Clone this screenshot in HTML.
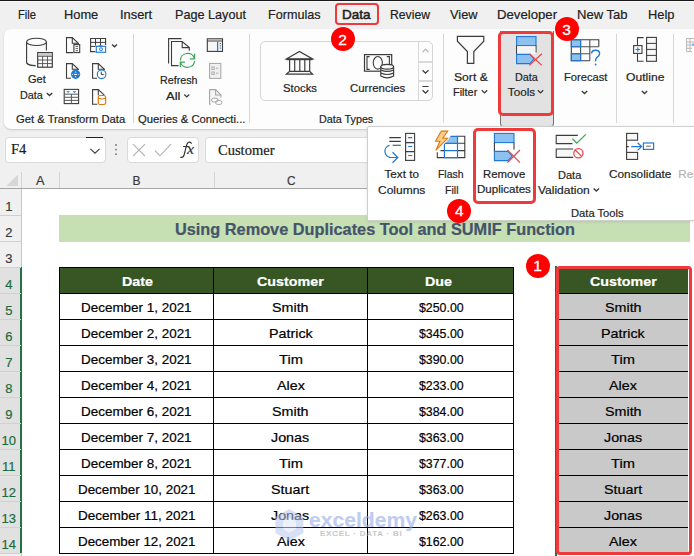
<!DOCTYPE html>
<html><head><meta charset="utf-8"><style>
html,body{margin:0;padding:0;}
body{width:694px;height:556px;position:relative;overflow:hidden;background:#ffffff;font-family:"Liberation Sans", sans-serif;}
.t{position:absolute;white-space:pre;transform-origin:0 0;-webkit-text-stroke:0.2px currentColor;}
.r{position:absolute;box-sizing:border-box;}
svg{position:absolute;overflow:visible;}
</style></head><body>
<div class="r" style="left:0px;top:0px;width:694px;height:189px;background:#f0f0f0;"></div>
<div class="r" style="left:0px;top:0px;width:694px;height:1.2px;background:#1a1a1a;"></div>
<div class="r" style="left:0px;top:1.2px;width:694px;height:1px;background:#f9f9f9;"></div>
<div class="r" style="left:3.5px;top:29px;width:700px;height:99.5px;background:#fdfdfd;border-radius:7px;box-shadow:0 1px 2px rgba(0,0,0,0.16);"></div>
<div class="t" style="left:18.40px;top:7.95px;font-size:13px;line-height:13px;color:#202020;font-family:'Liberation Sans', sans-serif;transform:scaleX(0.859);">File</div>
<div class="t" style="left:64.00px;top:7.95px;font-size:13px;line-height:13px;color:#202020;font-family:'Liberation Sans', sans-serif;transform:scaleX(0.986);">Home</div>
<div class="t" style="left:119.80px;top:7.95px;font-size:13px;line-height:13px;color:#202020;font-family:'Liberation Sans', sans-serif;transform:scaleX(0.990);">Insert</div>
<div class="t" style="left:175.00px;top:7.95px;font-size:13px;line-height:13px;color:#202020;font-family:'Liberation Sans', sans-serif;transform:scaleX(0.973);">Page Layout</div>
<div class="t" style="left:268.00px;top:7.95px;font-size:13px;line-height:13px;color:#202020;font-family:'Liberation Sans', sans-serif;transform:scaleX(0.971);">Formulas</div>
<div class="t" style="left:342.00px;top:7.95px;font-size:13px;line-height:13px;color:#202020;font-family:'Liberation Sans', sans-serif;transform:scaleX(1.038);-webkit-text-stroke:0.5px #202020;">Data</div>
<div class="t" style="left:390.00px;top:7.95px;font-size:13px;line-height:13px;color:#202020;font-family:'Liberation Sans', sans-serif;transform:scaleX(0.938);">Review</div>
<div class="t" style="left:450.00px;top:7.95px;font-size:13px;line-height:13px;color:#202020;font-family:'Liberation Sans', sans-serif;transform:scaleX(0.984);">View</div>
<div class="t" style="left:497.00px;top:7.95px;font-size:13px;line-height:13px;color:#202020;font-family:'Liberation Sans', sans-serif;transform:scaleX(1.013);">Developer</div>
<div class="t" style="left:577.00px;top:7.95px;font-size:13px;line-height:13px;color:#202020;font-family:'Liberation Sans', sans-serif;transform:scaleX(1.005);">New Tab</div>
<div class="t" style="left:648.00px;top:7.95px;font-size:13px;line-height:13px;color:#202020;font-family:'Liberation Sans', sans-serif;transform:scaleX(0.987);">Help</div>
<div class="r" style="left:133px;top:34px;width:1px;height:89px;background:#d6d6d6;"></div>
<div class="r" style="left:249px;top:34px;width:1px;height:89px;background:#d6d6d6;"></div>
<div class="r" style="left:443px;top:34px;width:1px;height:89px;background:#d6d6d6;"></div>
<div class="r" style="left:616px;top:34px;width:1px;height:89px;background:#d6d6d6;"></div>
<div class="r" style="left:673px;top:34px;width:1px;height:89px;background:#d6d6d6;"></div>
<div class="t" style="left:15.70px;top:112.86px;font-size:11.7px;line-height:11.7px;color:#242424;font-family:'Liberation Sans', sans-serif;transform:scaleX(0.961);">Get &amp; Transform Data</div>
<div class="t" style="left:137.50px;top:112.86px;font-size:11.7px;line-height:11.7px;color:#242424;font-family:'Liberation Sans', sans-serif;transform:scaleX(0.967);">Queries &amp; Connecti...</div>
<div class="t" style="left:319.00px;top:112.56px;font-size:11.7px;line-height:11.7px;color:#242424;font-family:'Liberation Sans', sans-serif;transform:scaleX(0.921);">Data Types</div>
<div class="t" style="left:28.20px;top:73.06px;font-size:11.7px;line-height:11.7px;color:#242424;font-family:'Liberation Sans', sans-serif;transform:scaleX(0.944);">Get</div>
<div class="t" style="left:19.60px;top:89.06px;font-size:11.7px;line-height:11.7px;color:#242424;font-family:'Liberation Sans', sans-serif;transform:scaleX(0.923);">Data</div>
<div class="t" style="left:159.70px;top:73.56px;font-size:11.7px;line-height:11.7px;color:#242424;font-family:'Liberation Sans', sans-serif;transform:scaleX(0.915);">Refresh</div>
<div class="t" style="left:166.30px;top:89.66px;font-size:11.7px;line-height:11.7px;color:#242424;font-family:'Liberation Sans', sans-serif;transform:scaleX(1.115);">All</div>
<div class="t" style="left:283.00px;top:82.06px;font-size:11.7px;line-height:11.7px;color:#242424;font-family:'Liberation Sans', sans-serif;transform:scaleX(0.968);">Stocks</div>
<div class="t" style="left:350.30px;top:82.06px;font-size:11.7px;line-height:11.7px;color:#242424;font-family:'Liberation Sans', sans-serif;transform:scaleX(0.978);">Currencies</div>
<div class="t" style="left:454.00px;top:70.86px;font-size:11.7px;line-height:11.7px;color:#242424;font-family:'Liberation Sans', sans-serif;transform:scaleX(1.040);">Sort &amp;</div>
<div class="t" style="left:452.70px;top:86.46px;font-size:11.7px;line-height:11.7px;color:#242424;font-family:'Liberation Sans', sans-serif;transform:scaleX(0.935);">Filter</div>
<div class="t" style="left:563.50px;top:70.96px;font-size:11.7px;line-height:11.7px;color:#242424;font-family:'Liberation Sans', sans-serif;transform:scaleX(0.954);">Forecast</div>
<div class="t" style="left:625.60px;top:70.96px;font-size:11.7px;line-height:11.7px;color:#242424;font-family:'Liberation Sans', sans-serif;transform:scaleX(1.036);">Outline</div>
<div class="r" style="left:4.5px;top:137px;width:101px;height:25.5px;background:#ffffff;border:1px solid #d9d9d9;border-radius:4px;"></div>
<div class="r" style="left:86px;top:137px;width:17px;height:1.2px;background:#222;"></div>
<div class="t" style="left:10.60px;top:141.97px;font-size:14.5px;line-height:14.5px;color:#1a1a1a;font-family:'Liberation Serif', serif;transform:scaleX(1.006);">F4</div>
<div class="r" style="left:126.7px;top:137px;width:72.5px;height:25.5px;background:#ffffff;border:1px solid #d9d9d9;border-radius:4px;"></div>
<div class="r" style="left:204.5px;top:137px;width:500px;height:25.5px;background:#ffffff;border:1px solid #d9d9d9;border-radius:4px;"></div>
<div class="t" style="left:218.20px;top:142.75px;font-size:15px;line-height:15px;color:#1a1a1a;font-family:'Liberation Serif', serif;transform:scaleX(0.969);">Customer</div>
<div class="r" style="left:0px;top:171px;width:694px;height:18px;background:#f0f0f0;"></div>
<div class="r" style="left:0px;top:188px;width:694px;height:1.3px;background:#a6a6a6;"></div>
<div class="r" style="left:21px;top:172px;width:1px;height:16px;background:#d4d4d4;"></div>
<div class="r" style="left:59px;top:172px;width:1px;height:16px;background:#d4d4d4;"></div>
<div class="r" style="left:213.5px;top:172px;width:1px;height:16px;background:#d4d4d4;"></div>
<div class="t" style="left:36.20px;top:174.60px;font-size:12px;line-height:12px;color:#3a3a3a;font-family:'Liberation Sans', sans-serif;transform:scaleX(1.062);">A</div>
<div class="t" style="left:132.50px;top:174.60px;font-size:12px;line-height:12px;color:#3a3a3a;font-family:'Liberation Sans', sans-serif;">B</div>
<div class="t" style="left:286.90px;top:174.60px;font-size:12px;line-height:12px;color:#3a3a3a;font-family:'Liberation Sans', sans-serif;transform:scaleX(0.981);">C</div>
<div class="r" style="left:0px;top:189px;width:21px;height:367px;background:#f0f0f0;"></div>
<div class="r" style="left:0px;top:267px;width:20px;height:286px;background:#e1e1e1;"></div>
<div class="r" style="left:20px;top:267px;width:2px;height:286px;background:#217346;"></div>
<div class="r" style="left:21px;top:553px;width:1px;height:3px;background:#c8c8c8;"></div>
<div class="r" style="left:21px;top:189px;width:1px;height:78px;background:#c8c8c8;"></div>
<div class="r" style="left:0px;top:215px;width:21px;height:1px;background:#d0d0d0;"></div>
<div class="r" style="left:0px;top:241px;width:21px;height:1px;background:#d0d0d0;"></div>
<div class="r" style="left:0px;top:267px;width:21px;height:1px;background:#d0d0d0;"></div>
<div class="r" style="left:0px;top:293px;width:21px;height:1px;background:#d0d0d0;"></div>
<div class="r" style="left:0px;top:319px;width:21px;height:1px;background:#d0d0d0;"></div>
<div class="r" style="left:0px;top:345px;width:21px;height:1px;background:#d0d0d0;"></div>
<div class="r" style="left:0px;top:371px;width:21px;height:1px;background:#d0d0d0;"></div>
<div class="r" style="left:0px;top:397px;width:21px;height:1px;background:#d0d0d0;"></div>
<div class="r" style="left:0px;top:423px;width:21px;height:1px;background:#d0d0d0;"></div>
<div class="r" style="left:0px;top:449px;width:21px;height:1px;background:#d0d0d0;"></div>
<div class="r" style="left:0px;top:475px;width:21px;height:1px;background:#d0d0d0;"></div>
<div class="r" style="left:0px;top:501px;width:21px;height:1px;background:#d0d0d0;"></div>
<div class="r" style="left:0px;top:527px;width:21px;height:1px;background:#d0d0d0;"></div>
<div class="r" style="left:0px;top:553px;width:21px;height:1px;background:#d0d0d0;"></div>
<div class="t" style="left:5.18px;top:199.95px;font-size:13px;line-height:13px;color:#3a3a3a;font-family:'Liberation Sans', sans-serif;">1</div>
<div class="t" style="left:5.18px;top:225.95px;font-size:13px;line-height:13px;color:#3a3a3a;font-family:'Liberation Sans', sans-serif;">2</div>
<div class="t" style="left:5.18px;top:251.95px;font-size:13px;line-height:13px;color:#3a3a3a;font-family:'Liberation Sans', sans-serif;">3</div>
<div class="t" style="left:5.18px;top:277.95px;font-size:13px;line-height:13px;color:#1e6b3c;font-family:'Liberation Sans', sans-serif;">4</div>
<div class="t" style="left:5.18px;top:303.95px;font-size:13px;line-height:13px;color:#1e6b3c;font-family:'Liberation Sans', sans-serif;">5</div>
<div class="t" style="left:5.18px;top:329.95px;font-size:13px;line-height:13px;color:#1e6b3c;font-family:'Liberation Sans', sans-serif;">6</div>
<div class="t" style="left:5.18px;top:355.95px;font-size:13px;line-height:13px;color:#1e6b3c;font-family:'Liberation Sans', sans-serif;">7</div>
<div class="t" style="left:5.18px;top:381.95px;font-size:13px;line-height:13px;color:#1e6b3c;font-family:'Liberation Sans', sans-serif;">8</div>
<div class="t" style="left:5.18px;top:407.95px;font-size:13px;line-height:13px;color:#1e6b3c;font-family:'Liberation Sans', sans-serif;">9</div>
<div class="t" style="left:1.57px;top:433.95px;font-size:13px;line-height:13px;color:#1e6b3c;font-family:'Liberation Sans', sans-serif;">10</div>
<div class="t" style="left:2.05px;top:459.95px;font-size:13px;line-height:13px;color:#1e6b3c;font-family:'Liberation Sans', sans-serif;">11</div>
<div class="t" style="left:1.57px;top:485.95px;font-size:13px;line-height:13px;color:#1e6b3c;font-family:'Liberation Sans', sans-serif;">12</div>
<div class="t" style="left:1.57px;top:511.95px;font-size:13px;line-height:13px;color:#1e6b3c;font-family:'Liberation Sans', sans-serif;">13</div>
<div class="t" style="left:1.57px;top:537.95px;font-size:13px;line-height:13px;color:#1e6b3c;font-family:'Liberation Sans', sans-serif;">14</div>
<div class="r" style="left:59px;top:215px;width:631px;height:26.5px;background:#c6dfb3;"></div>
<div class="t" style="left:174.50px;top:220.78px;font-size:16.5px;line-height:16.5px;color:#44546a;font-family:'Liberation Sans', sans-serif;font-weight:bold;transform:scaleX(0.988);">Using Remove Duplicates Tool and SUMIF Function</div>
<div class="r" style="left:59px;top:267px;width:455px;height:27px;background:#375623;"></div>
<div class="r" style="left:59px;top:267px;width:455px;height:1px;background:#000;"></div>
<div class="r" style="left:59px;top:293px;width:455px;height:1px;background:#000;"></div>
<div class="r" style="left:59px;top:319px;width:455px;height:1px;background:#000;"></div>
<div class="r" style="left:59px;top:345px;width:455px;height:1px;background:#000;"></div>
<div class="r" style="left:59px;top:371px;width:455px;height:1px;background:#000;"></div>
<div class="r" style="left:59px;top:397px;width:455px;height:1px;background:#000;"></div>
<div class="r" style="left:59px;top:423px;width:455px;height:1px;background:#000;"></div>
<div class="r" style="left:59px;top:449px;width:455px;height:1px;background:#000;"></div>
<div class="r" style="left:59px;top:475px;width:455px;height:1px;background:#000;"></div>
<div class="r" style="left:59px;top:501px;width:455px;height:1px;background:#000;"></div>
<div class="r" style="left:59px;top:527px;width:455px;height:1px;background:#000;"></div>
<div class="r" style="left:59px;top:553px;width:455px;height:1px;background:#000;"></div>
<div class="r" style="left:59px;top:267px;width:1px;height:287px;background:#000;"></div>
<div class="r" style="left:213px;top:267px;width:1px;height:287px;background:#000;"></div>
<div class="r" style="left:367px;top:267px;width:1px;height:287px;background:#000;"></div>
<div class="r" style="left:513px;top:267px;width:1px;height:287px;background:#000;"></div>
<div class="t" style="left:121.50px;top:274.65px;font-size:13px;line-height:13px;color:#ffffff;font-family:'Liberation Sans', sans-serif;font-weight:bold;transform:scaleX(1.100);">Date</div>
<div class="t" style="left:257.13px;top:274.65px;font-size:13px;line-height:13px;color:#ffffff;font-family:'Liberation Sans', sans-serif;font-weight:bold;transform:scaleX(1.100);">Customer</div>
<div class="t" style="left:424.99px;top:274.65px;font-size:13px;line-height:13px;color:#ffffff;font-family:'Liberation Sans', sans-serif;font-weight:bold;transform:scaleX(1.100);">Due</div>
<div class="t" style="left:81.30px;top:301.15px;font-size:13px;line-height:13px;color:#000;font-family:'Liberation Sans', sans-serif;transform:scaleX(1.034);">December 1, 2021</div>
<div class="t" style="left:272.22px;top:301.15px;font-size:13px;line-height:13px;color:#000;font-family:'Liberation Sans', sans-serif;transform:scaleX(1.100);">Smith</div>
<div class="t" style="left:418.68px;top:301.15px;font-size:13px;line-height:13px;color:#000;font-family:'Liberation Sans', sans-serif;transform:scaleX(0.950);">$250.00</div>
<div class="t" style="left:81.30px;top:327.15px;font-size:13px;line-height:13px;color:#000;font-family:'Liberation Sans', sans-serif;transform:scaleX(1.034);">December 2, 2021</div>
<div class="t" style="left:268.65px;top:327.15px;font-size:13px;line-height:13px;color:#000;font-family:'Liberation Sans', sans-serif;transform:scaleX(1.100);">Patrick</div>
<div class="t" style="left:418.68px;top:327.15px;font-size:13px;line-height:13px;color:#000;font-family:'Liberation Sans', sans-serif;transform:scaleX(0.950);">$345.00</div>
<div class="t" style="left:81.30px;top:353.15px;font-size:13px;line-height:13px;color:#000;font-family:'Liberation Sans', sans-serif;transform:scaleX(1.034);">December 3, 2021</div>
<div class="t" style="left:278.59px;top:353.15px;font-size:13px;line-height:13px;color:#000;font-family:'Liberation Sans', sans-serif;transform:scaleX(1.125);">Tim</div>
<div class="t" style="left:418.68px;top:353.15px;font-size:13px;line-height:13px;color:#000;font-family:'Liberation Sans', sans-serif;transform:scaleX(0.950);">$390.00</div>
<div class="t" style="left:81.30px;top:379.15px;font-size:13px;line-height:13px;color:#000;font-family:'Liberation Sans', sans-serif;transform:scaleX(1.034);">December 4, 2021</div>
<div class="t" style="left:276.59px;top:379.15px;font-size:13px;line-height:13px;color:#000;font-family:'Liberation Sans', sans-serif;transform:scaleX(1.100);">Alex</div>
<div class="t" style="left:418.68px;top:379.15px;font-size:13px;line-height:13px;color:#000;font-family:'Liberation Sans', sans-serif;transform:scaleX(0.950);">$233.00</div>
<div class="t" style="left:81.30px;top:405.15px;font-size:13px;line-height:13px;color:#000;font-family:'Liberation Sans', sans-serif;transform:scaleX(1.034);">December 6, 2021</div>
<div class="t" style="left:272.22px;top:405.15px;font-size:13px;line-height:13px;color:#000;font-family:'Liberation Sans', sans-serif;transform:scaleX(1.100);">Smith</div>
<div class="t" style="left:418.68px;top:405.15px;font-size:13px;line-height:13px;color:#000;font-family:'Liberation Sans', sans-serif;transform:scaleX(0.950);">$384.00</div>
<div class="t" style="left:81.30px;top:431.15px;font-size:13px;line-height:13px;color:#000;font-family:'Liberation Sans', sans-serif;transform:scaleX(1.034);">December 7, 2021</div>
<div class="t" style="left:271.42px;top:431.15px;font-size:13px;line-height:13px;color:#000;font-family:'Liberation Sans', sans-serif;transform:scaleX(1.100);">Jonas</div>
<div class="t" style="left:418.68px;top:431.15px;font-size:13px;line-height:13px;color:#000;font-family:'Liberation Sans', sans-serif;transform:scaleX(0.950);">$363.00</div>
<div class="t" style="left:81.30px;top:457.15px;font-size:13px;line-height:13px;color:#000;font-family:'Liberation Sans', sans-serif;transform:scaleX(1.034);">December 8, 2021</div>
<div class="t" style="left:278.59px;top:457.15px;font-size:13px;line-height:13px;color:#000;font-family:'Liberation Sans', sans-serif;transform:scaleX(1.125);">Tim</div>
<div class="t" style="left:418.68px;top:457.15px;font-size:13px;line-height:13px;color:#000;font-family:'Liberation Sans', sans-serif;transform:scaleX(0.950);">$377.00</div>
<div class="t" style="left:77.86px;top:483.15px;font-size:13px;line-height:13px;color:#000;font-family:'Liberation Sans', sans-serif;transform:scaleX(1.029);">December 10, 2021</div>
<div class="t" style="left:271.42px;top:483.15px;font-size:13px;line-height:13px;color:#000;font-family:'Liberation Sans', sans-serif;transform:scaleX(1.100);">Stuart</div>
<div class="t" style="left:418.68px;top:483.15px;font-size:13px;line-height:13px;color:#000;font-family:'Liberation Sans', sans-serif;transform:scaleX(0.950);">$363.00</div>
<div class="t" style="left:77.86px;top:509.15px;font-size:13px;line-height:13px;color:#000;font-family:'Liberation Sans', sans-serif;transform:scaleX(1.038);">December 11, 2021</div>
<div class="t" style="left:271.42px;top:509.15px;font-size:13px;line-height:13px;color:#000;font-family:'Liberation Sans', sans-serif;transform:scaleX(1.100);">Jonas</div>
<div class="t" style="left:418.68px;top:509.15px;font-size:13px;line-height:13px;color:#000;font-family:'Liberation Sans', sans-serif;transform:scaleX(0.950);">$263.00</div>
<div class="t" style="left:77.86px;top:535.15px;font-size:13px;line-height:13px;color:#000;font-family:'Liberation Sans', sans-serif;transform:scaleX(1.029);">December 12, 2021</div>
<div class="t" style="left:276.59px;top:535.15px;font-size:13px;line-height:13px;color:#000;font-family:'Liberation Sans', sans-serif;transform:scaleX(1.100);">Alex</div>
<div class="t" style="left:418.68px;top:535.15px;font-size:13px;line-height:13px;color:#000;font-family:'Liberation Sans', sans-serif;transform:scaleX(0.950);">$162.00</div>
<div class="r" style="left:555px;top:266px;width:2px;height:290px;background:#217346;"></div>
<div class="r" style="left:557px;top:267px;width:131px;height:27px;background:#375623;"></div>
<div class="r" style="left:557px;top:293px;width:131px;height:261px;background:#c9c9c9;"></div>
<div class="r" style="left:688px;top:267px;width:4px;height:287px;background:#ffffff;"></div>
<div class="r" style="left:557px;top:293px;width:131px;height:1px;background:#000;"></div>
<div class="r" style="left:557px;top:319px;width:131px;height:1px;background:#000;"></div>
<div class="r" style="left:557px;top:345px;width:131px;height:1px;background:#000;"></div>
<div class="r" style="left:557px;top:371px;width:131px;height:1px;background:#000;"></div>
<div class="r" style="left:557px;top:397px;width:131px;height:1px;background:#000;"></div>
<div class="r" style="left:557px;top:423px;width:131px;height:1px;background:#000;"></div>
<div class="r" style="left:557px;top:449px;width:131px;height:1px;background:#000;"></div>
<div class="r" style="left:557px;top:475px;width:131px;height:1px;background:#000;"></div>
<div class="r" style="left:557px;top:501px;width:131px;height:1px;background:#000;"></div>
<div class="r" style="left:557px;top:527px;width:131px;height:1px;background:#000;"></div>
<div class="t" style="left:589.63px;top:274.65px;font-size:13px;line-height:13px;color:#ffffff;font-family:'Liberation Sans', sans-serif;font-weight:bold;transform:scaleX(1.100);">Customer</div>
<div class="t" style="left:604.72px;top:301.15px;font-size:13px;line-height:13px;color:#000;font-family:'Liberation Sans', sans-serif;transform:scaleX(1.100);">Smith</div>
<div class="t" style="left:601.15px;top:327.15px;font-size:13px;line-height:13px;color:#000;font-family:'Liberation Sans', sans-serif;transform:scaleX(1.100);">Patrick</div>
<div class="t" style="left:611.09px;top:353.15px;font-size:13px;line-height:13px;color:#000;font-family:'Liberation Sans', sans-serif;transform:scaleX(1.125);">Tim</div>
<div class="t" style="left:609.09px;top:379.15px;font-size:13px;line-height:13px;color:#000;font-family:'Liberation Sans', sans-serif;transform:scaleX(1.100);">Alex</div>
<div class="t" style="left:604.72px;top:405.15px;font-size:13px;line-height:13px;color:#000;font-family:'Liberation Sans', sans-serif;transform:scaleX(1.100);">Smith</div>
<div class="t" style="left:603.92px;top:431.15px;font-size:13px;line-height:13px;color:#000;font-family:'Liberation Sans', sans-serif;transform:scaleX(1.100);">Jonas</div>
<div class="t" style="left:611.09px;top:457.15px;font-size:13px;line-height:13px;color:#000;font-family:'Liberation Sans', sans-serif;transform:scaleX(1.125);">Tim</div>
<div class="t" style="left:603.92px;top:483.15px;font-size:13px;line-height:13px;color:#000;font-family:'Liberation Sans', sans-serif;transform:scaleX(1.100);">Stuart</div>
<div class="t" style="left:603.92px;top:509.15px;font-size:13px;line-height:13px;color:#000;font-family:'Liberation Sans', sans-serif;transform:scaleX(1.100);">Jonas</div>
<div class="t" style="left:609.09px;top:535.15px;font-size:13px;line-height:13px;color:#000;font-family:'Liberation Sans', sans-serif;transform:scaleX(1.100);">Alex</div>
<div class="r" style="left:555.5px;top:265.5px;width:136.5px;height:289px;border:3px solid #ee3a3a;border-radius:4px;"></div>
<div class="r" style="left:334.5px;top:3.3px;width:44.5px;height:22.2px;border:2.5px solid #ee3a3a;border-radius:4px;"></div>

<svg width="694" height="556" viewBox="0 0 694 556" style="left:0;top:0;">
<g fill="none" stroke="#3c3c3c" stroke-width="1.1" stroke-linejoin="miter">
 <!-- Get Data cylinder -->
 <path d="M26.6 42 V62 Q26.6 65.2 35.5 65.6" fill="#fafafa"/>
 <path d="M26.6 42 V62 Q27 65 37 65.6 L37 52 L46.4 52 V42 Z" fill="#fafafa" stroke="none"/>
 <path d="M26.6 42 V62.5 Q27.5 65.3 35.5 65.6"/>
 <path d="M46.4 42 V50.5"/>
 <ellipse cx="36.5" cy="41.9" rx="9.9" ry="3.6" fill="#fdfdfd"/>
 <rect x="37.7" y="52.6" width="14.6" height="14.6" fill="#fdfdfd" stroke-width="1.2"/>
 <rect x="38.3" y="53.2" width="13.4" height="2.6" fill="#c8c8c8" stroke="none"/>
 <path d="M37.7 56.3 H52.3 M37.7 60 H52.3 M37.7 63.6 H52.3 M42.6 56.3 V67.2 M47.5 56.3 V67.2" stroke="#5a5a5a" stroke-width="1"/>
 <!-- doc lines -->
 <path d="M73 52.6 H66.5 V37.6 H72.3 L78.3 43.3 V44.3"/>
 <path d="M72.3 37.6 V43.3 H78.3"/>
 <rect x="73.9" y="44.6" width="5.8" height="8" fill="#fafafa"/>
 <path d="M75.6 46.5 H78 M75.6 48.6 H78 M75.6 50.7 H78" stroke-width="0.8"/>
 <!-- table camera -->
 <path d="M95.5 51.6 H90.6 V38.5 H105.6 V45" />
 <path d="M90.6 42.4 H105.6 M90.6 46.4 H95.5 M95.5 38.5 V45.5 M100.5 38.5 V45.5" stroke-width="1"/>
 <rect x="96.3" y="46.3" width="9.3" height="6" fill="#fdfdfd" stroke="#1f78d1" stroke-width="1.1"/>
 <rect x="98.7" y="45.4" width="3.5" height="1.2" fill="#1f78d1" stroke="none"/>
 <circle cx="101" cy="49.3" r="1.5" stroke="#1f78d1" stroke-width="1"/>
 <path d="M112 44.4 L114.5 46.8 L117 44.4" stroke-width="1.35"/>
 <!-- doc globe -->
 <path d="M71 78.3 H66.5 V63.6 H72.3 L78.3 69.3 V70"/>
 <path d="M72.3 63.6 V69.3 H78.3"/>
 <circle cx="75.6" cy="74.3" r="4.6" fill="#1f78d1" stroke="none"/>
 <path d="M72 74.4 H72.8 M74.1 74.4 H77.1 M78.4 74.4 H79.2" stroke="#ffffff" stroke-width="1"/><path d="M74.6 72.6 L75.5 71.2 L76.4 72.6 Z M74.6 76.2 L75.5 77.6 L76.4 76.2 Z" fill="#fff" stroke="none"/>
 <!-- doc clock -->
 <path d="M97 78.3 H92.6 V63.6 H98.3 L104.3 69.3 V70"/>
 <path d="M98.3 63.6 V69.3 H104.3"/>
 <circle cx="101.6" cy="74.3" r="4.3" fill="#ffffff" stroke="#1f78d1" stroke-width="1.1"/>
 <path d="M101.3 71.6 V74.6 H103.8" stroke-width="1"/>
 <!-- table filter -->
 <rect x="64.2" y="89.4" width="14.4" height="14.2" fill="#fdfdfd" stroke-width="1.1"/>
 <path d="M64.2 94.2 H78.6 M64.2 97.3 H78.6 M64.2 100.4 H78.6 M71.4 94.2 V103.6" stroke="#5a5a5a" stroke-width="1"/>
 <path d="M66.3 91.2 H70 L68.15 93 Z M72.6 91.2 H76.3 L74.45 93 Z" fill="#1f78d1" stroke="none"/>
 <!-- doc orange cylinder -->
 <path d="M97.3 104.3 H92.6 V89.6 H98.3 L104.3 95.2"/>
 <path d="M98.3 89.6 V95.2"/>
 <rect x="98.3" y="95.5" width="7.3" height="9" rx="1.8" fill="#fdfdfd" stroke="#e0780c" stroke-width="1.2"/>
 <path d="M98.3 98.2 Q101.95 100 105.6 98.2" stroke="#e0780c" stroke-width="1"/>
 <!-- refresh all -->
 <path d="M168.6 63.4 V38.6 H181.5"/>
 <path d="M178.6 65.6 H171.5 V41.5 H182.2 L189.3 47.6 V50.8"/>
 <path d="M182.2 41.5 V47.6 H189.3"/>
 <path d="M180.4 60.6 A7.2 7.2 0 0 1 194.4 58.2" stroke="#3da35a" stroke-width="1.2"/>
 <path d="M194.6 61 A7.2 7.2 0 0 1 180.7 62.6" stroke="#3da35a" stroke-width="1.2"/>
 <path d="M194.6 53.8 V58.8 H189.8" stroke="#3da35a" stroke-width="1.2"/>
 <path d="M180.3 66.9 V62.2 H185" stroke="#3da35a" stroke-width="1.2"/>
 <path d="M184.3 94.6 L186.8 96.9 L189.3 94.6" stroke-width="1.35"/>
 <!-- queries panel -->
 <rect x="207.3" y="38.8" width="15.2" height="12.6" fill="#f6f6f6" stroke-width="1.1"/>
 <path d="M207.3 41 H222.5" stroke-width="1"/>
 <path d="M217.6 41.5 V51" stroke="#1f78d1" stroke-width="1.2"/>
 <path d="M219.6 43.5 H221 M219.6 45.8 H221 M219.6 48.1 H221" stroke="#1f78d1" stroke-width="1"/>
 <!-- properties grey -->
 <rect x="209.6" y="63.4" width="11.2" height="15" fill="#f0f0f0" stroke="#a6a6a6" stroke-width="1"/>
 <rect x="211.9" y="67" width="2.4" height="2.4" stroke="#a6a6a6" stroke-width="0.9"/>
 <rect x="211.9" y="72" width="2.4" height="2.4" stroke="#a6a6a6" stroke-width="0.9"/>
 <path d="M216 68.2 H218.4 M216 73.2 H218.4" stroke="#a6a6a6" stroke-width="0.9"/>
 <!-- link grey -->
 <path d="M210.8 104.3 H209.6 V89.6 H215.6 L221 95 V97.4" stroke="#a6a6a6" fill="#f4f4f4"/>
 <path d="M215.6 89.6 V95 H221" stroke="#a6a6a6"/>
 <rect x="211.6" y="98.2" width="6.4" height="3.8" rx="1.9" stroke="#a6a6a6" stroke-width="1" fill="#fdfdfd"/>
 <rect x="215.6" y="100.6" width="6.4" height="3.8" rx="1.9" stroke="#a6a6a6" stroke-width="1" fill="none"/>
</g>
<g fill="none" stroke="#3c3c3c" stroke-width="1.2">
 <!-- bank -->
 <path d="M286.3 58.9 L299.4 51.4 L312.6 58.9 Z" fill="#f8f8f8"/>
 <path d="M286.3 59.5 H312.6" stroke-width="1.4"/>
 <path d="M289.6 59.6 V71.3 M294.7 59.6 V71.3 M299.8 59.6 V71.3 M304.8 59.6 V71.3 M309.7 59.6 V71.3" />
 <path d="M289.6 71.4 H309.7 L312.6 74.2 H286.3 Z" fill="#f8f8f8"/>
 <!-- currencies -->
 <rect x="364.5" y="54.6" width="27.2" height="16.6" fill="#fbfbfb"/>
 <path d="M369.6 56.6 H367 V69.4 H369.6 M386.8 56.6 H389.4 V66" stroke-width="1.1"/>
 <ellipse cx="377.8" cy="62.8" rx="4.6" ry="6.3" stroke-width="1.1"/>
 <path d="M380.8 66.7 V76 Q387.2 79.6 393.6 76 V66.7" fill="#fbfbfb"/>
 <ellipse cx="387.2" cy="66.7" rx="6.4" ry="2.4" fill="#fbfbfb"/>
 <path d="M380.8 69.9 Q387.2 72.9 393.6 69.9 M380.8 73 Q387.2 76 393.6 73" stroke-width="1.1"/>
 <!-- funnel -->
 <path d="M457.4 36.4 H483.8 V41.2 L473.8 51.6 V63.3 H467.4 V51.6 L457.4 41.2 Z" fill="#fbfbfb"/>
 <!-- forecast -->
 <rect x="571.3" y="39.7" width="9.3" height="7" fill="#8dc1ef" stroke="none"/>
 <rect x="571.3" y="53.7" width="9.3" height="7" fill="#8dc1ef" stroke="none"/>
 <path d="M590 60.7 H571.3 V39.7 H598.8 V46.7" stroke-width="1.1"/>
 <path d="M571.3 46.7 H598.8 M571.3 53.7 H590 M580.6 39.7 V60.7 M589.8 39.7 V60.7" stroke-width="1.1" stroke="#505050"/>
 <path d="M571.3 39.7 H580.6 V46.7 H571.3 Z M571.3 53.7 H580.6 V60.7 H571.3 Z" stroke="#1f78d1" stroke-width="1.1"/>
 <path d="M591.6 53.6 Q591.6 50.2 595.6 50.2 Q599.6 50.2 599.6 53.6 Q599.6 56 596.8 57.6 Q595.6 58.4 595.6 61.2" stroke="#1f78d1" stroke-width="1.4"/>
 <circle cx="595.6" cy="64.5" r="0.9" fill="#1f78d1" stroke="none"/>
 <path d="M581.8 91 L584.5 93.6 L587.2 91" stroke-width="1.35"/>
 <!-- outline -->
 <path d="M643.6 37.6 H637.5 V45.4 M637.5 53.6 V61.2 H643.6" stroke-width="1.1"/>
 <rect x="633.6" y="45.6" width="8.4" height="7.8" fill="#fdfdfd" stroke-width="1.1"/>
 <path d="M635.5 49.5 H640.1 M637.8 47.2 V51.8" stroke="#1f78d1" stroke-width="1.1"/>
 <rect x="646.6" y="37.4" width="9.8" height="23.9" fill="#f8f8f8" stroke-width="1.1"/>
 <path d="M646.6 43.4 H656.4 M646.6 49.4 H656.4 M646.6 55.4 H656.4" stroke-width="1"/>
 <path d="M641.8 91 L644.5 93.6 L647.2 91" stroke-width="1.35"/>
 <!-- faded icon -->
 <path d="M686.6 38.5 H694 M686.6 38.5 V51.6 H692 M686.6 42 H694 M686.6 45 H692 M686.6 48.3 H692 M690 38.5 V51.6" stroke="#b8b8b8" stroke-width="1"/>
 <rect x="692" y="43.6" width="2" height="2.2" fill="#7aaee0" stroke="none"/>
 <!-- chevrons text -->
 <path d="M46.8 92.9 L49.5 95.6 L52.2 92.9" stroke-width="1.35"/>
 <path d="M481.8 90.2 L484.5 92.9 L487.2 90.2" stroke-width="1.35"/>
</g>
</svg>
<div class="r" style="left:259.5px;top:41px;width:173px;height:59.5px;border:1px solid #d4d4d4;border-radius:5px;"></div>
<div class="r" style="left:418.3px;top:41.5px;width:1px;height:58.5px;background:#d9d9d9;"></div>
<div class="r" style="left:419px;top:61px;width:13px;height:1.6px;background:#d9d9d9;"></div>
<div class="r" style="left:419px;top:80px;width:13px;height:1.6px;background:#d9d9d9;"></div>
<svg width="694" height="556" viewBox="0 0 694 556" style="left:0;top:0;"><g fill="none" stroke-width="1">
<path d="M422.6 52.2 L425.5 49.2 L428.4 52.2" stroke="#b4b4b4" stroke-width="1.2"/>
<path d="M422.6 70.2 L425.5 73.1 L428.4 70.2" stroke="#3c3c3c" stroke-width="1.3"/>
<path d="M422.4 86.5 H428.6" stroke="#3c3c3c"/>
<path d="M422.6 90.2 L425.5 93.1 L428.4 90.2" stroke="#3c3c3c" stroke-width="1.3"/>
</g></svg>
<div class="r" style="left:499.5px;top:31px;width:54px;height:95.5px;background:#e4e4e4;border:1px solid #707070;border-top:none;border-bottom-color:#c4c4c4;border-radius:0 0 4px 4px;"></div>
<div class="r" style="left:498.3px;top:30.8px;width:55.5px;height:85.3px;border:3px solid #ee3a3a;border-radius:5px;background:#e2e2e2;"></div>
<svg width="694" height="556" viewBox="0 0 694 556" style="left:0;top:0;"><g fill="none" stroke-width="1.1">
<rect x="516.6" y="36.6" width="19.4" height="9" fill="#8dc1ef" stroke="#1f78d1"/>
<path d="M516.6 45.6 V54.4 M536 45.6 V52.6" stroke="#3c3c3c"/>
<rect x="517.2" y="46.2" width="18.2" height="8" fill="#f4f4f4" stroke="none"/>
<path d="M516.6 54.4 H530 L534 59 L530 63.6 H516.6 Z" fill="#8dc1ef" stroke="#1f78d1"/>
<path d="M529.4 53.8 L541.8 65.4 M541.8 53.8 L529.4 65.4" stroke="#e5484d" stroke-width="1.3"/>
</g></svg>
<div class="t" style="left:514.60px;top:70.86px;font-size:11.7px;line-height:11.7px;color:#242424;font-family:'Liberation Sans', sans-serif;transform:scaleX(0.923);">Data</div>
<div class="t" style="left:507.80px;top:86.46px;font-size:11.7px;line-height:11.7px;color:#242424;font-family:'Liberation Sans', sans-serif;">Tools</div>
<svg width="694" height="556" viewBox="0 0 694 556" style="left:0;top:0;"><path d="M537.8 90.2 L540.5 92.9 L543.2 90.2" fill="none" stroke="#3c3c3c" stroke-width="1.35"/></svg>
<svg width="694" height="556" viewBox="0 0 694 556" style="left:0;top:0;"><path d="M6.5 186 L18 174.5 V186 Z" fill="#d6d6d6"/></svg>
<svg width="694" height="556" viewBox="0 0 694 556" style="left:0;top:0;"><g fill="none" stroke-width="1.1">
<path d="M90.4 148.8 L95 153.2 L99.6 148.8" stroke="#3c3c3c"/>
<circle cx="116" cy="145" r="0.9" fill="#707070"/>
<circle cx="116" cy="149.6" r="0.9" fill="#707070"/>
<circle cx="116" cy="154.2" r="0.9" fill="#707070"/>
<path d="M133 144.2 L145 156.2 M145 144.2 L133 156.2" stroke="#b0b0b0"/>
<path d="M155 150.6 L160 155.8 L171 144.2" stroke="#b0b0b0"/>
</g></svg>
<svg width="694" height="556" viewBox="0 0 694 556" style="left:0;top:0;"><g fill="none" stroke="#303030" stroke-width="1.15" stroke-linecap="round"><path d="M191.3 143.3 Q190.4 141.8 188.6 142.3 Q187 142.8 186.2 146.6 L184.2 154.6 Q183.4 157.9 180.6 157.3"/><path d="M183.6 146.5 H189"/></g></svg>
<div class="t" style="left:187.20px;top:143.28px;font-size:14px;line-height:14px;color:#303030;font-family:'Liberation Serif', serif;font-style:italic;transform:scaleX(1.127);">x</div>
<div class="r" style="left:367px;top:125.8px;width:340px;height:95.2px;background:#ffffff;border:1px solid #cfcfcf;border-radius:2px 0 0 0;box-shadow:0 1px 3px rgba(0,0,0,0.10);"></div>
<div class="t" style="left:384.50px;top:168.06px;font-size:11.7px;line-height:11.7px;color:#242424;font-family:'Liberation Sans', sans-serif;">Text to</div>
<div class="t" style="left:377.60px;top:183.56px;font-size:11.7px;line-height:11.7px;color:#242424;font-family:'Liberation Sans', sans-serif;transform:scaleX(1.027);">Columns</div>
<div class="t" style="left:437.90px;top:168.06px;font-size:11.7px;line-height:11.7px;color:#242424;font-family:'Liberation Sans', sans-serif;transform:scaleX(0.891);">Flash</div>
<div class="t" style="left:444.50px;top:183.56px;font-size:11.7px;line-height:11.7px;color:#242424;font-family:'Liberation Sans', sans-serif;transform:scaleX(0.903);">Fill</div>
<div class="t" style="left:482.70px;top:168.06px;font-size:11.7px;line-height:11.7px;color:#242424;font-family:'Liberation Sans', sans-serif;transform:scaleX(0.973);">Remove</div>
<div class="t" style="left:477.00px;top:183.06px;font-size:11.7px;line-height:11.7px;color:#242424;font-family:'Liberation Sans', sans-serif;transform:scaleX(0.987);">Duplicates</div>
<div class="t" style="left:558.30px;top:168.66px;font-size:11.7px;line-height:11.7px;color:#242424;font-family:'Liberation Sans', sans-serif;transform:scaleX(0.943);">Data</div>
<div class="t" style="left:538.20px;top:184.36px;font-size:11.7px;line-height:11.7px;color:#242424;font-family:'Liberation Sans', sans-serif;transform:scaleX(1.025);">Validation</div>
<div class="t" style="left:608.50px;top:167.56px;font-size:11.7px;line-height:11.7px;color:#242424;font-family:'Liberation Sans', sans-serif;transform:scaleX(1.011);">Consolidate</div>
<div class="t" style="left:678.30px;top:167.56px;font-size:11.7px;line-height:11.7px;color:#b4b4b4;font-family:'Liberation Sans', sans-serif;">Rel</div>
<div class="t" style="left:570.50px;top:207.06px;font-size:11.7px;line-height:11.7px;color:#242424;font-family:'Liberation Sans', sans-serif;transform:scaleX(0.957);">Data Tools</div>
<svg width="694" height="556" viewBox="0 0 694 556" style="left:0;top:0;"><g fill="none" stroke="#3c3c3c" stroke-width="1.1">
 <!-- text to columns -->
 <path d="M389.3 137.6 H400.8 M389.3 141.4 H400.8 M392.6 145.2 H400.8" stroke-width="1.1"/>
 <path d="M389.6 145.3 A6.2 6.2 0 0 0 391.4 157.5 H397.4" stroke="#1f78d1" stroke-width="1.2"/>
 <path d="M392.5 152.3 L397.8 157.5 L392.5 162.7" stroke="#1f78d1" stroke-width="1.2"/>
 <rect x="405.6" y="133.4" width="9" height="27" fill="#fafafa"/>
 <path d="M405.6 142.6 H414.6 M405.6 151.6 H414.6"/>
 <path d="M408.1 137.6 H412.2 M408.1 146.5 H412.2 M408.1 155.5 H412.2" stroke="#1f78d1" stroke-width="1.2"/>
 <!-- flash fill -->
 <path d="M450.5 136.3 H457.5 V143.3 H444.4 Z" fill="#8dc1ef" stroke="none"/>
 <path d="M437.3 152.2 V157.6 H464.8 V136.3 H457.5 M464.8 143.3 H457.5 M464.8 150.6 H457.5 M440.5 150.6 H444.4" stroke="#3c3c3c" stroke-width="1.1"/>
 <path d="M444.4 143.3 V157.6 H457.5 V136.3 H450.5 M444.4 143.3 H457.5 M444.4 150.6 H457.5" stroke="#1f78d1" stroke-width="1.2"/>
 <path d="M441.3 131.1 H447.7 L442.8 138.3 H447.6 L435.8 150.4 L440 141.2 H435.5 Z" fill="#fbd08c" stroke="#ffffff" stroke-width="3" stroke-linejoin="round"/>
 <path d="M441.3 131.1 H447.7 L442.8 138.3 H447.6 L435.8 150.4 L440 141.2 H435.5 Z" fill="#fbd08c" stroke="#e0780c" stroke-width="1.1" stroke-linejoin="miter"/>
 <!-- remove duplicates -->
 <rect x="494.4" y="133.4" width="19.6" height="9.2" fill="#8dc1ef" stroke="#1f78d1"/>
 <path d="M494.4 142.6 V151.4 M514 142.6 V149.4" stroke="#3c3c3c"/>
 <path d="M494.4 151.4 H508 L512.2 156 L508 160.6 H494.4 Z" fill="#8dc1ef" stroke="#1f78d1"/>
 <path d="M507.4 150 L520 162.6 M520 150 L507.4 162.6" stroke="#e5484d" stroke-width="1.3"/>
 <!-- data validation -->
 <path d="M577.8 135.4 H556.2 V143.6 H572.4" fill="#f8f8f8"/>
 <path d="M572.4 138.8 L576.8 143.2 L585.8 134.4" stroke="#3aa757" stroke-width="1.3"/>
 <path d="M573.2 149 H556.2 V157.4 H573.2" fill="#f8f8f8"/>
 <circle cx="578.4" cy="153.2" r="4.6" fill="#fff" stroke="#e5484d" stroke-width="1.3"/>
 <path d="M575.2 150 L581.6 156.4" stroke="#e5484d" stroke-width="1.3"/>
 <!-- consolidate -->
 <rect x="626.6" y="133.4" width="11" height="6.8" fill="#f8f8f8"/>
 <rect x="626.6" y="152.4" width="11" height="7" fill="#f8f8f8"/>
 <path d="M626.6 140.2 V152.4 M626.6 146.6 H628.8"/>
 <path d="M631.2 146.6 H641.4 M637.6 142.8 L641.6 146.6 L637.6 150.4" stroke="#1f78d1" stroke-width="1.2"/>
 <rect x="643.4" y="143" width="10.2" height="6.4" stroke="#1f78d1" stroke-width="1.2" fill="#fff"/>
 <path d="M646.2 146.2 H650.8" stroke="#707070"/>
 <path d="M593.6 188.4 L596.3 191.1 L599 188.4" stroke-width="1.35"/>
</g></svg>
<div class="r" style="left:472.5px;top:127.9px;width:63.7px;height:75.9px;border:3px solid #ee3a3a;border-radius:5px;"></div>
<div class="r" style="left:525.5px;top:254px;width:24px;height:24px;background:#ff0000;border-radius:50%;"></div>
<div class="t" style="left:533.19px;top:258.43px;font-size:15.5px;line-height:15.5px;color:#fff;font-family:'Liberation Sans', sans-serif;-webkit-text-stroke:0.3px #fff;">1</div>
<div class="r" style="left:330.5px;top:27.200000000000003px;width:24px;height:24px;background:#ff0000;border-radius:50%;"></div>
<div class="t" style="left:338.19px;top:31.63px;font-size:15.5px;line-height:15.5px;color:#fff;font-family:'Liberation Sans', sans-serif;-webkit-text-stroke:0.3px #fff;">2</div>
<div class="r" style="left:554.5px;top:17.3px;width:24px;height:24px;background:#ff0000;border-radius:50%;"></div>
<div class="t" style="left:562.19px;top:21.73px;font-size:15.5px;line-height:15.5px;color:#fff;font-family:'Liberation Sans', sans-serif;-webkit-text-stroke:0.3px #fff;">3</div>
<div class="r" style="left:447.2px;top:198.6px;width:24px;height:24px;background:#ff0000;border-radius:50%;"></div>
<div class="t" style="left:454.89px;top:203.02px;font-size:15.5px;line-height:15.5px;color:#fff;font-family:'Liberation Sans', sans-serif;-webkit-text-stroke:0.3px #fff;">4</div>
<svg width="694" height="556" viewBox="0 0 694 556" style="left:0;top:0;opacity:0.55;">
<path d="M289.4 509 L303.4 517 V533 L289.4 541 L275.4 533 V517 Z" fill="#b9c8ee"/>
<path d="M283 521 L289.4 517.3 L296 521 V529 L289.4 532.8 L283 529 Z" fill="#dfe6f8"/>
</svg>
<div class="t" style="left:308.90px;top:508.75px;font-size:21px;line-height:21px;color:rgba(150,172,232,0.6);font-family:'Liberation Sans', sans-serif;font-weight:bold;transform:scaleX(1.006);">exceldemy</div>
<div class="t" style="left:320.00px;top:530.00px;font-size:8px;line-height:8px;color:rgba(160,160,160,0.5);font-family:'Liberation Sans', sans-serif;font-weight:bold;transform:scaleX(0.993);letter-spacing:0.8px;">EXCEL · DATA · BI</div>
</body></html>
